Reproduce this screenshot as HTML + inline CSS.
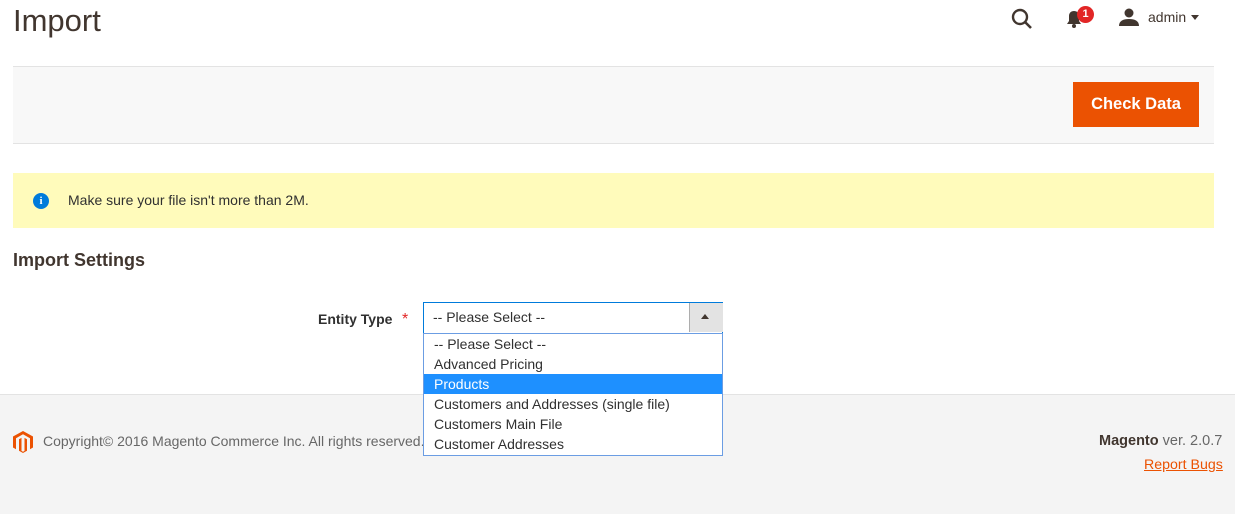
<!DOCTYPE html><html><head><style>
body{margin:0;width:1235px;height:513px;background:#fff;font-family:"Liberation Sans",sans-serif;position:relative;overflow:hidden;color:#303030}
.a{position:absolute}
</style></head><body>
<div class="a" style="left:13px;top:3px;font-size:31px;color:#41362f">Import</div>
<svg class="a" style="left:1011px;top:8px" width="22" height="22" viewBox="0 0 22 22"><circle cx="9" cy="9" r="7" fill="none" stroke="#41362f" stroke-width="2.4"/><path d="M14 14l6 6" stroke="#41362f" stroke-width="2.6"/></svg>
<svg class="a" style="left:1066px;top:10px" width="16" height="18" viewBox="0 0 16 18"><path d="M8 1c-3 0-5 2-5 5v5l-2 3h14l-2-3V6c0-3-2-5-5-5z" fill="#41362f"/><circle cx="8" cy="16" r="2" fill="#41362f"/></svg>
<div class="a" style="left:1077px;top:6px;width:17px;height:17px;border-radius:50%;background:#e22626;color:#fff;font-size:11px;font-weight:bold;text-align:center;line-height:17px">1</div>
<svg class="a" style="left:1119px;top:8px" width="20" height="18" viewBox="0 0 20 18"><circle cx="10" cy="5" r="4.5" fill="#41362f"/><path d="M0 18c0-5 4-7 10-7s10 2 10 7z" fill="#41362f"/></svg>
<div class="a" style="left:1148px;top:9px;font-size:14px;color:#41362f">admin</div>
<div class="a" style="left:1191px;top:15px;border:4px solid transparent;border-top:5px solid #41362f"></div>
<div class="a" style="left:13px;top:66px;width:1201px;height:76px;background:#f8f8f8;border-top:1px solid #e3e3e3;border-bottom:1px solid #e3e3e3"></div>
<div class="a" style="left:1073px;top:82px;width:126px;height:45px;background:#eb5202;color:#fff;font-size:16.5px;font-weight:bold;text-align:center;line-height:45px">Check Data</div>
<div class="a" style="left:13px;top:173px;width:1201px;height:55px;background:#fffbbb"></div>
<div class="a" style="left:33px;top:193px;width:16px;height:16px;border-radius:50%;background:#007bdb;color:#fff;font-size:11px;font-weight:bold;text-align:center;line-height:16px;font-family:'Liberation Serif',serif">i</div>
<div class="a" style="left:68px;top:192px;font-size:14px">Make sure your file isn't more than 2M.</div>
<div class="a" style="left:13px;top:250px;font-size:18px;font-weight:bold;color:#41362f">Import Settings</div>
<div class="a" style="left:318px;top:311px;font-size:14px;font-weight:bold;color:#303030">Entity Type</div>
<div class="a" style="left:402px;top:311px;font-size:16px;color:#e22626">*</div>
<div class="a" style="left:0;top:394px;width:1235px;height:119px;background:#f4f4f4;border-top:1px solid #e3e3e3"></div>
<svg class="a" style="left:13px;top:431px" width="20" height="22" viewBox="0 0 20 22"><path d="M10 0L0 5.5v11l3 1.7V7.2l7-4 7 4v11l3-1.7v-11zM10 6L6 8.3v11.5L10 22l4-2.2V8.3l-2.5-1.4v13l-1.5.8-1.5-.8V6.9z" fill="#eb5202"/></svg>
<div class="a" style="left:43px;top:433px;font-size:14px;color:#676767">Copyright© 2016 Magento Commerce Inc. All rights reserved.</div>
<div class="a" style="left:1099px;top:433px;font-size:14.5px;color:#676767"><b style="color:#41362f">Magento</b> ver. 2.0.7</div>
<div class="a" style="left:1144px;top:457px;font-size:14.2px;color:#eb5202;text-decoration:underline">Report Bugs</div>
<div class="a" style="left:423px;top:302px;width:298px;height:30px;border:1px solid #007bdb;background:#fff"></div>
<div class="a" style="left:433px;top:309px;font-size:14px;color:#303030">-- Please Select --</div>
<div class="a" style="left:689px;top:303px;width:33px;height:29px;background:#e3e3e3;border-left:1px solid #adadad"></div>
<div class="a" style="left:701px;top:314px;border:4px solid transparent;border-bottom:5px solid #41362f;border-top:0"></div>
<div class="a" style="left:423px;top:333px;width:298px;height:121px;border:1px solid #6b9de3;background:#fff;font-size:14px;line-height:20px">
<div style="padding-left:10px">-- Please Select --</div>
<div style="padding-left:10px">Advanced Pricing</div>
<div style="padding-left:10px;background:#1e90ff;color:#fff">Products</div>
<div style="padding-left:10px">Customers and Addresses (single file)</div>
<div style="padding-left:10px">Customers Main File</div>
<div style="padding-left:10px">Customer Addresses</div>
</div>
</body></html>
